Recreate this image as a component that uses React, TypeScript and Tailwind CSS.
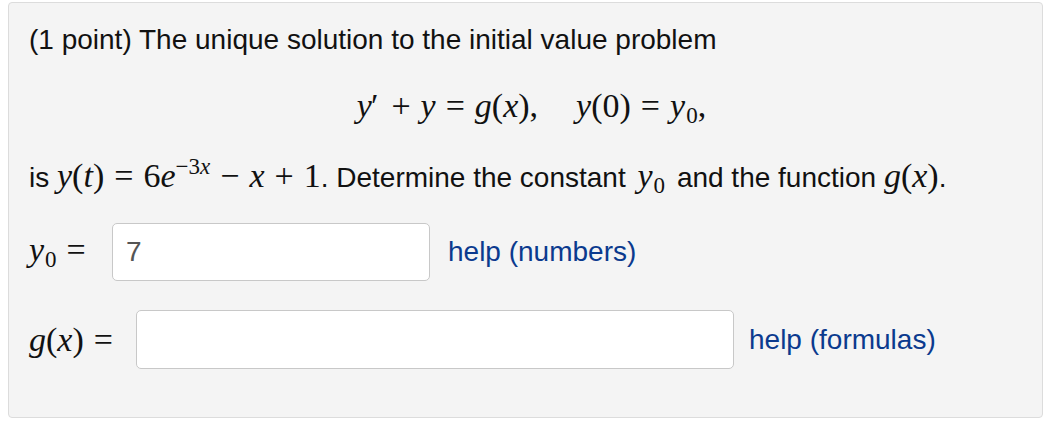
import React from "react";

const sans = { fontFamily: '"Liberation Sans", Arial, sans-serif' };

// small math helpers: serif italic vars, upright digits/operators
function V({ children }: { children: React.ReactNode }) {
  return <span className="italic">{children}</span>;
}

function Sub0() {
  return <span className="relative top-[6px] ml-[1px] text-[23px] not-italic">0</span>;
}

function Op({ children }: { children: React.ReactNode }) {
  return <span className="mx-[10px]">{children}</span>;
}

function Math({ children, className = "" }: { children: React.ReactNode; className?: string }) {
  return (
    <span
      className={`whitespace-nowrap text-[34px] leading-[34px] text-[#111] ${className}`}
      style={{ fontFamily: '"Liberation Serif", "Times New Roman", serif' }}
    >
      {children}
    </span>
  );
}

export default function App() {
  return (
    <div className="h-[424px] w-[1052px] bg-white pl-2 pt-[2px]" style={sans}>
      <div className="h-[416px] w-[1035px] rounded-[4px] border border-[#dcdcdc] bg-[#f4f4f4] pl-5 pr-4 pt-5 text-[28px] leading-[34px] text-[#111]">
        <p>(1 point) The unique solution to the initial value problem</p>

        <div className="mt-[32px] flex justify-center pl-[8px]">
          <Math>
            <V>y</V>
            <span className="-ml-[1px] mr-[3px]">′</span>
            <Op>+</Op>
            <V>y</V>
            <Op>=</Op>
            <V>g</V>(<V>x</V>),
            <span className="inline-block w-[38px]" />
            <V>y</V>(0)
            <Op>=</Op>
            <V>y</V>
            <Sub0 />,
          </Math>
        </div>

        <p className="mt-[32px]">
          is{" "}
          <Math>
            <V>y</V>(<V>t</V>)<Op>=</Op>6<V>e</V>
            <sup className="relative -top-[13px] text-[23px]">−3<V>x</V></sup>
            <Op>−</Op>
            <V>x</V>
            <Op>+</Op>1
          </Math>
          . Determine the constant{" "}
          <Math className="mx-[4px]">
            <V>y</V>
            <Sub0 />
          </Math>{" "}
          and the function{" "}
          <Math>
            <V>g</V>(<V>x</V>)
          </Math>
          .
        </p>

        <div className="mt-[26px] flex items-center">
          <Math className="w-[83px]">
            <V>y</V>
            <Sub0 />
            <Op>=</Op>
          </Math>
          <input
            defaultValue="7"
            className="h-[58px] w-[318px] rounded-[5px] border border-[#c8c8c8] bg-white px-[13px] text-[28px] text-[#555] outline-none"
            style={sans}
          />
          <a className="ml-[18px] text-[#0b3a8e]">help (numbers)</a>
        </div>

        <div className="mt-[29px] flex items-center">
          <Math className="w-[107px]">
            <V>g</V>(<V>x</V>)<Op>=</Op>
          </Math>
          <input
            className="h-[59px] w-[598px] rounded-[5px] border border-[#c8c8c8] bg-white px-[13px] text-[28px] text-[#555] outline-none"
            style={sans}
          />
          <a className="ml-[15px] text-[#0b3a8e]">help (formulas)</a>
        </div>
      </div>
    </div>
  );
}
